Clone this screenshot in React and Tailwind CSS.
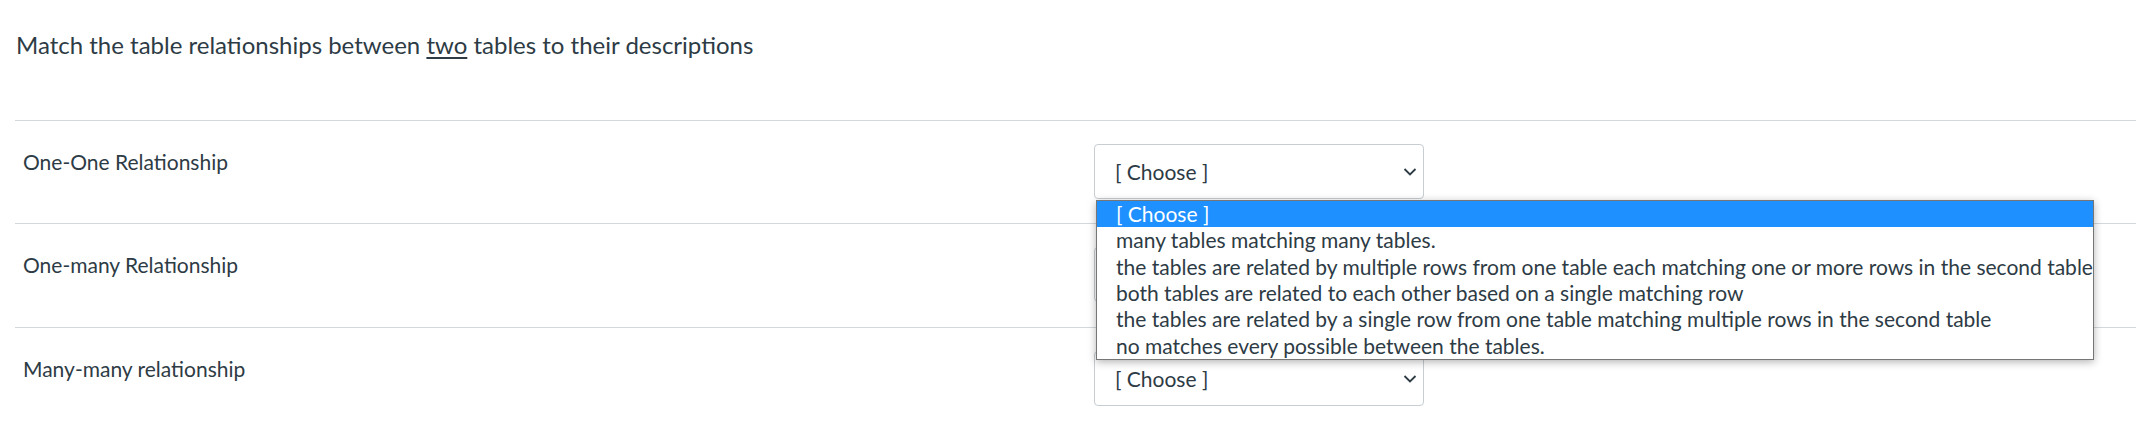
export default function App() {
  const options = [
    "[ Choose ]",
    "many tables matching many tables.",
    "the tables are related by multiple rows from one table each matching one or more rows in the second table",
    "both tables are related to each other based on a single matching row",
    "the tables are related by a single row from one table matching multiple rows in the second table",
    "no matches every possible between the tables.",
  ];
  const rows = ["One-One Relationship", "One-many Relationship", "Many-many relationship"];

  const Chevron = () => (
    <svg width="14" height="8" viewBox="0 0 14 8" className="shrink-0">
      <polyline points="1.5,1 7,6.5 12.5,1" fill="none" stroke="#2d3b45" strokeWidth="1.8" />
    </svg>
  );

  return (
    <div className="w-[2136px] h-[448px] overflow-hidden bg-white text-[#2d3b45] font-[Lato,sans-serif]">
      <div className="pt-[31px] pl-[16px] text-[24px] leading-[28px] h-[120px]">
        Match the table relationships between{" "}
        <span className="underline decoration-[1.5px] underline-offset-[3px]">two</span> tables to their descriptions
      </div>
      <div className="ml-[15px]">
        {rows.map((label, i) => (
          <div key={label} className={`flex border-t border-[#d4d8db] ${i === 1 ? "h-[104px]" : "h-[103px]"}`}>
            <div className="w-[1079px] pl-[8px] pt-[28px] text-[21px] leading-[25px]">{label}</div>
            <div className="relative pt-[23px]">
              <div className="flex items-center justify-between w-[330px] h-[55px] border border-[#c7cdd1] rounded-[4px] bg-white pl-[20px] pr-[6px] text-[21px]">
                <span>[ Choose ]</span>
                <Chevron />
              </div>
              {i === 0 && (
                <div className="absolute left-[2px] top-[79px] z-10 w-[998px] bg-white border border-[#767676] shadow-[0_2px_8px_rgba(0,0,0,0.3)] text-[21px]">
                  {options.map((o, j) => (
                    <div
                      key={j}
                      className={`h-[26.33px] leading-[26.33px] pl-[19px] whitespace-nowrap ${j === 0 ? "bg-[#1e90ff] text-white" : "text-[#2d3b45]"}`}
                    >
                      {o}
                    </div>
                  ))}
                </div>
              )}
            </div>
          </div>
        ))}
      </div>
    </div>
  );
}
